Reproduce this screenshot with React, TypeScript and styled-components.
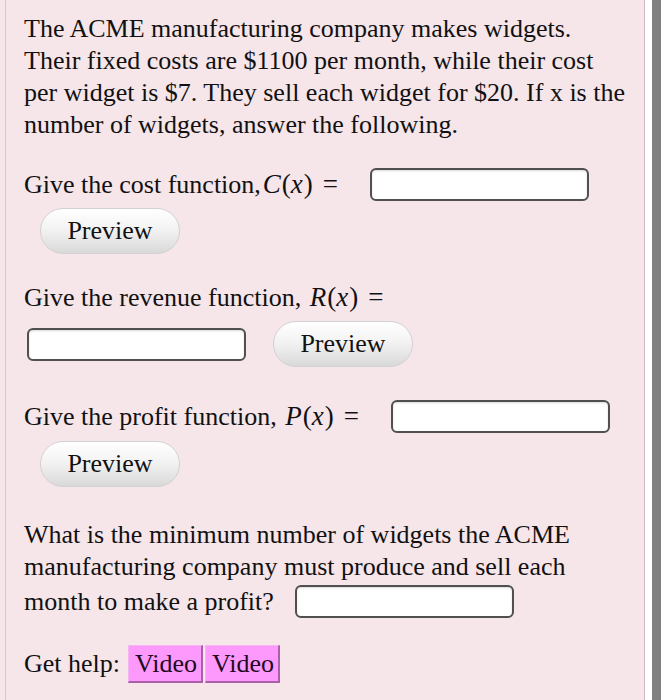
import React from "react";
import styled, { createGlobalStyle } from "styled-components";

const Global = createGlobalStyle`
  html, body { margin: 0; padding: 0; background: #ffffff; }
  body { font-family: "Liberation Serif", "Times New Roman", serif; color: #111; }
`;

const Page = styled.div`
  display: flex;
  width: 661px;
  height: 700px;
  overflow: hidden;
`;

const Main = styled.div`
  width: 645px;
  background: #f6e5e9;
  padding-left: 5px;
  box-sizing: border-box;
  display: flex;
`;

const Panel = styled.div`
  flex: 1;
  border-left: 1px solid #dcc3ca;
  border-right: 1px solid #d3b8c0;
  padding: 13px 0 0 18px;
  font-size: 26px;
  line-height: 32px;
`;

const Gap = styled.div`
  width: 7px;
  background: #ffffff;
`;

const Scrollbar = styled.div`
  width: 9px;
  background: #808080;
`;

const Para = styled.p<{ $mt?: number }>`
  margin: ${(p) => p.$mt ?? 0}px 0 0 0;
`;

const Row = styled.div<{ $mt: number; $gap?: number }>`
  display: flex;
  align-items: center;
  margin-top: ${(p) => p.$mt}px;
  gap: ${(p) => p.$gap ?? 0}px;
`;

const MathExpr = styled.span`
  white-space: nowrap;
  padding-left: 2px;
  font-size: 27px;
  line-height: 1;
`;

const MI = styled.span`
  font-style: italic;
  padding-right: 1px;
`;

const Eq = styled.span`
  margin: 0 0 0 10px;
`;

const Answer = styled.input<{ $ml?: number }>`
  box-sizing: border-box;
  width: 219px;
  height: 33px;
  margin: 0 0 0 ${(p) => p.$ml ?? 0}px;
  border: 2px solid #505050;
  border-radius: 6px;
  background: #fff;
  box-shadow: inset 0 1px 2px rgba(0, 0, 0, 0.15);
  padding: 0 6px;
  font-family: inherit;
  font-size: 20px;
  outline: none;
`;

const PreviewButton = styled.button<{ $ml?: number; $mt?: number }>`
  display: block;
  box-sizing: border-box;
  width: 140px;
  height: 46px;
  margin: ${(p) => p.$mt ?? 0}px 0 0 ${(p) => p.$ml ?? 0}px;
  border: 1px solid #d2d2d2;
  border-radius: 23px;
  background: linear-gradient(to bottom, #ffffff 0%, #f3f3f3 45%, #d9d9d9 100%);
  font-family: "Liberation Serif", "Times New Roman", serif;
  font-size: 26px;
  color: #111;
  padding: 0;
  cursor: pointer;
`;

const HelpLabel = styled.span`
  margin-right: 8px;
`;

const VideoButton = styled.button`
  box-sizing: border-box;
  height: 38px;
  padding: 0 4px 0 6px;
  margin-right: 2px;
  background: #fd99fd;
  border: none;
  border-top: 1px solid #f2b6f2;
  border-left: 1px solid #f2b6f2;
  border-right: 2px solid #a95fa9;
  border-bottom: 2px solid #a95fa9;
  font-family: "Liberation Serif", "Times New Roman", serif;
  font-size: 26px;
  line-height: 32px;
  color: #1d0a1d;
  cursor: pointer;
`;

export default function App() {
  return (
    <>
      <Global />
      <Page>
        <Main>
          <Panel>
            <Para>
              The ACME manufacturing company makes widgets.
              <br />
              Their fixed costs are $1100 per month, while their cost
              <br />
              per widget is $7. They sell each widget for $20. If x is the
              <br />
              number of widgets, answer the following.
            </Para>

            <Row $mt={27}>
              <span>Give the cost function,</span>
              <MathExpr>
                <MI>C</MI>(<MI>x</MI>)<Eq>=</Eq>
              </MathExpr>
              <Answer $ml={32} aria-label="cost function" />
            </Row>
            <PreviewButton $mt={7} $ml={16}>Preview</PreviewButton>

            <Para $mt={28}>
              Give the revenue function,{" "}
              <MathExpr>
                <MI>R</MI>(<MI>x</MI>)<Eq>=</Eq>
              </MathExpr>
            </Para>
            <Row $mt={7} $gap={27}>
              <Answer $ml={3} aria-label="revenue function" />
              <PreviewButton>Preview</PreviewButton>
            </Row>

            <Row $mt={33}>
              <span>Give the profit function,&nbsp;</span>
              <MathExpr>
                <MI>P</MI>(<MI>x</MI>)<Eq>=</Eq>
              </MathExpr>
              <Answer $ml={32} aria-label="profit function" />
            </Row>
            <PreviewButton $mt={8} $ml={16}>Preview</PreviewButton>

            <Para $mt={32}>
              What is the minimum number of widgets the ACME
              <br />
              manufacturing company must produce and sell each
            </Para>
            <Row $mt={2}>
              <span>month to make a profit?</span>
              <Answer $ml={21} aria-label="minimum widgets" />
            </Row>

            <Row $mt={27}>
              <HelpLabel>Get help:</HelpLabel>
              <VideoButton>Video</VideoButton>
              <VideoButton>Video</VideoButton>
            </Row>
          </Panel>
        </Main>
        <Gap />
        <Scrollbar />
      </Page>
    </>
  );
}
